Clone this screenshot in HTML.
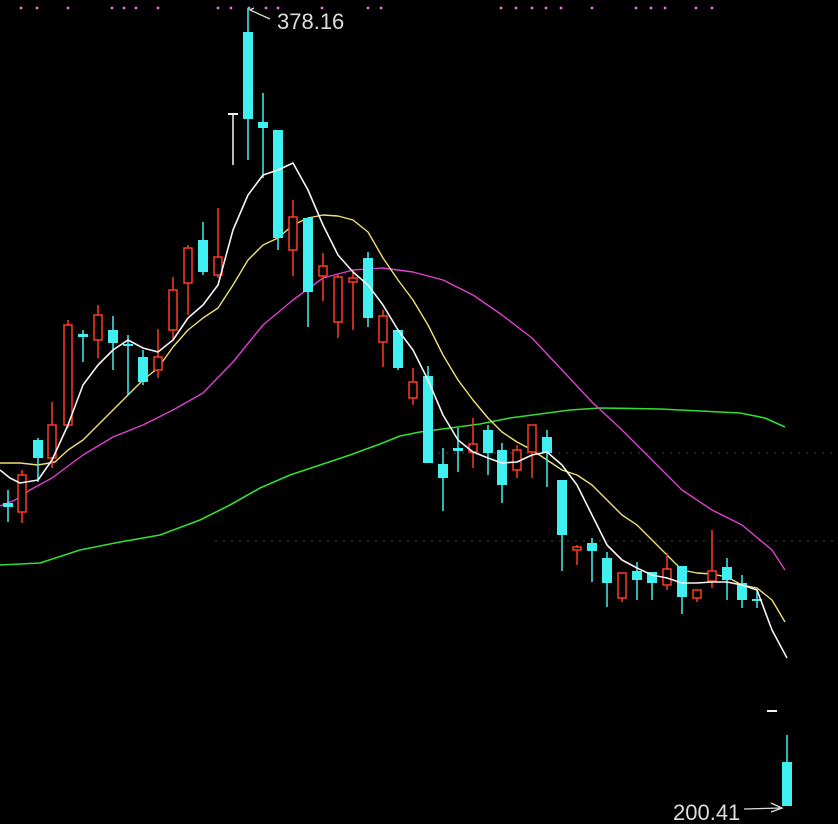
<!DOCTYPE html>
<html><head><meta charset="utf-8"><style>
html,body{margin:0;padding:0;background:#000;width:838px;height:824px;overflow:hidden}
svg{display:block}
text{font-family:"Liberation Sans",sans-serif;fill:#dcdcdc}
</style></head><body>
<svg id="s" width="838" height="824" viewBox="0 0 838 824" xmlns="http://www.w3.org/2000/svg">
<line x1="430" y1="453" x2="838" y2="453" stroke="#444" stroke-dasharray="2 6" stroke-width="1"/>
<line x1="215" y1="541" x2="838" y2="541" stroke="#444" stroke-dasharray="2 6" stroke-width="1"/>
<g id="dots" fill="#f070e0"></g>
<polyline fill="none" stroke="#33dd33" stroke-width="1.6" stroke-linejoin="round" points="0,565 40,563 80,550 120,542 160,535 200,520 230,505 260,488 290,475 320,465 350,455 380,444 400,436 420,432 450,428 480,424 510,418 540,414 570,410 600,408 660,409 700,411 740,413 765,418 785,427"/>
<polyline fill="none" stroke="#e040d0" stroke-width="1.4" stroke-linejoin="round" points="0,506 15,500 30,490 52,478 83,455 113,437 143,425 173,410 203,393 233,362 263,325 293,300 323,278 353,270 383,268 413,272 443,280 473,295 502,315 532,338 562,370 592,402 622,430 652,460 682,490 712,510 742,525 772,550 785,570"/>
<polyline fill="none" stroke="#f0e070" stroke-width="1.4" stroke-linejoin="round" points="0,463 20,463 38,465 55,462 68,450 83,440 98,425 113,410 128,395 143,380 158,368 173,347 188,330 203,318 218,308 233,285 248,260 263,245 278,238 293,225 308,218 323,215 338,216 353,220 368,232 383,258 398,280 413,300 428,325 443,355 458,380 473,400 488,418 502,432 517,442 532,450 547,460 562,470 577,475 592,485 607,500 622,515 637,525 652,540 667,555 682,570 697,573 712,574 727,577 742,585 757,588 772,600 785,622"/>
<g id="c"></g>
<polyline fill="none" stroke="#f4f4f4" stroke-width="1.6" stroke-linejoin="round" points="0,470 10,478 20,483 38,480 52,460 68,425 83,385 98,365 113,350 128,340 143,348 158,352 173,340 188,318 203,305 218,285 233,230 248,195 263,175 278,170 293,163 308,190 323,225 338,255 353,272 368,285 383,305 398,330 413,350 428,380 443,415 458,440 473,452 488,458 502,463 517,462 532,455 547,452 562,465 577,485 592,515 607,545 622,560 637,568 652,575 667,578 682,583 697,583 712,582 727,582 742,585 757,590 772,630 787,658"/>
<polyline fill="none" stroke="#ddd" stroke-width="1.3" points="270,19 250,10 254,8"/>
<text x="277" y="29" font-size="22">378.16</text>
<text x="673" y="820" font-size="22">200.41</text>
<polyline fill="none" stroke="#ddd" stroke-width="1.3" points="744,809 782,808"/>
<polyline fill="none" stroke="#ddd" stroke-width="1.3" points="771,803 782,808 771,812"/>
</svg>
<script>
var C=[[8,'c',503,507,490,522],[22,'r',475,512,470,523],[38,'c',440,458,438,482],[52,'r',425,458,402,468],[68,'r',325,425,320,428],[83,'c',334,337,330,362],[98,'r',315,340,305,358],[113,'c',330,343,316,370],[128,'c',344,346,335,395],[143,'c',357,382,350,385],[158,'r',357,370,329,378],[173,'r',290,330,277,340],[188,'r',248,283,245,315],[203,'c',240,272,222,275],[218,'r',257,275,208,278],[233,'w',113,115,113,165],[248,'c',32,119,8,160],[263,'c',122,128,93,178],[278,'c',130,238,130,250],[293,'r',217,250,200,276],[308,'c',218,292,218,327],[323,'r',266,276,253,301],[338,'r',277,322,275,338],[353,'r',278,282,270,330],[368,'c',258,318,252,327],[383,'r',316,342,310,367],[398,'c',330,368,330,370],[413,'r',382,398,368,405],[428,'c',376,463,366,463],[443,'c',464,478,448,511],[458,'c',448,451,428,472],[473,'r',444,452,418,468],[488,'c',430,453,425,475],[502,'c',450,485,443,503],[517,'r',450,470,445,478],[532,'r',425,452,425,478],[547,'c',437,453,430,487],[562,'c',480,535,480,571],[577,'r',547,550,545,565],[592,'c',543,551,538,582],[607,'c',558,583,552,607],[622,'r',573,598,573,602],[637,'c',571,580,562,600],[652,'c',572,583,572,600],[667,'r',569,585,553,590],[682,'c',566,597,566,614],[697,'r',590,598,590,602],[712,'r',571,581,530,588],[727,'c',567,580,558,600],[742,'c',583,600,575,608],[757,'c',599,601,590,608],[772,'w',710,712,710,712],[787,'c',762,806,735,806]];
var g='';C.forEach(function(k){var x=k[0],t=k[1],o=k[2],c=k[3],h=k[4],l=k[5];
var col=t=='r'?'#ff3a20':(t=='w'?'#f4f4f4':'#40f0f0');
g+='<line x1="'+x+'" y1="'+h+'" x2="'+x+'" y2="'+l+'" stroke="'+col+'" stroke-width="1.5"/>';
var ht=Math.max(c-o,2);
if(t=='r')g+='<rect x="'+(x-4)+'" y="'+o+'" width="8" height="'+ht+'" fill="#000" stroke="'+col+'" stroke-width="1.5"/>';
else g+='<rect x="'+(x-5)+'" y="'+o+'" width="10" height="'+ht+'" fill="'+col+'"/>';});
document.getElementById('c').innerHTML=g;
var D=[21,37,68,112,124,136,158,218,231,249,266,278,322,368,381,501,516,532,546,561,592,636,651,665,696,712],d='';
D.forEach(function(x){d+='<circle cx="'+x+'" cy="8" r="1.4"/>';});
document.getElementById('dots').innerHTML=d;
</script>
</body></html>
